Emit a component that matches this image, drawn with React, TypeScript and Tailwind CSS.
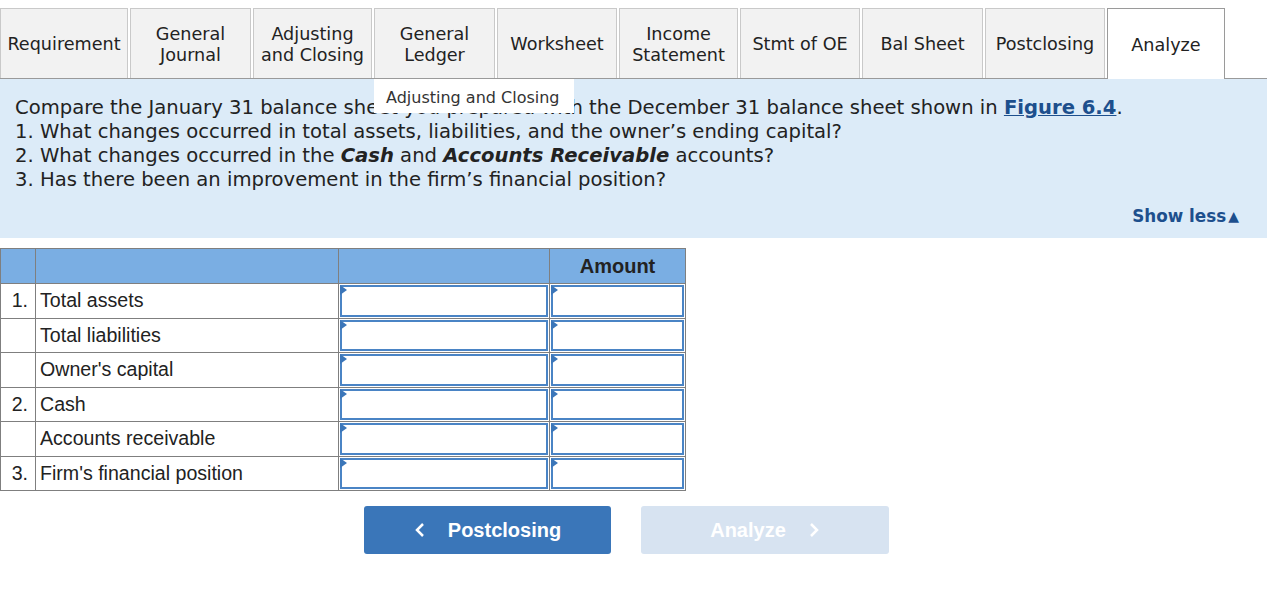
import React from "react";

const tabs: { label: React.ReactNode; w: number; active?: boolean }[] = [
  { label: "Requirement", w: 128 },
  { label: <>General<br />Journal</>, w: 121 },
  { label: <>Adjusting<br />and Closing</>, w: 119 },
  { label: <>General<br />Ledger</>, w: 121 },
  { label: "Worksheet", w: 120 },
  { label: <>Income<br />Statement</>, w: 119 },
  { label: "Stmt of OE", w: 120 },
  { label: "Bal Sheet", w: 121 },
  { label: "Postclosing", w: 120 },
  { label: "Analyze", w: 118, active: true },
];

const rows: { n: string; label: string }[] = [
  { n: "1.", label: "Total assets" },
  { n: "", label: "Total liabilities" },
  { n: "", label: "Owner's capital" },
  { n: "2.", label: "Cash" },
  { n: "", label: "Accounts receivable" },
  { n: "3.", label: "Firm's financial position" },
];

function InputBox() {
  return (
    <div className="relative h-full w-full border-2 border-[#4a84c5] bg-white">
      <svg className="absolute left-[-2px] top-[-2px]" width="8" height="10" viewBox="0 0 8 10">
        <polygon points="0,0 7,5 0,10" fill="#3b76b9" />
      </svg>
    </div>
  );
}

export default function App() {
  return (
    <div className="relative h-[601px] w-[1267px] overflow-hidden bg-white" style={{ fontFamily: "'DejaVu Sans', sans-serif" }}>
      {/* Tabs */}
      <div className="flex items-end gap-[2px] border-b border-[#9a9a9a] pt-2">
        {tabs.map((t, i) => (
          <div
            key={i}
            style={{ width: t.w }}
            className={
              "flex h-[70px] items-center justify-center whitespace-nowrap pt-[2px] text-center text-[17.6px] leading-[21px] text-[#222] " +
              (t.active
                ? "relative top-[1px] -mt-[1px] h-[71px] border border-b-0 border-[#9a9a9a] bg-white"
                : "border border-b-0 border-[#c9c9c9] bg-[#f2f2f2]")
            }
          >
            <span>{t.label}</span>
          </div>
        ))}
      </div>

      {/* Question panel */}
      <div className="relative h-[159px] bg-[#dcebf8] pl-[15px] pt-[17px] text-[19.6px] leading-[24px] text-[#222]">
        <div className="whitespace-nowrap">
          Compare the January 31 balance sheet you prepared with the December 31 balance sheet shown in{" "}
          <span className="font-bold text-[#1d4f8d] underline">Figure 6.4</span>.
        </div>
        <div className="whitespace-nowrap">1. What changes occurred in total assets, liabilities, and the owner’s ending capital?</div>
        <div className="whitespace-nowrap">
          2. What changes occurred in the <b><i>Cash</i></b> and <b><i>Accounts Receivable</i></b> accounts?
        </div>
        <div className="whitespace-nowrap">3. Has there been an improvement in the firm’s financial position?</div>
        <div className="absolute bottom-[10px] right-[28px] flex items-center text-[16.8px] font-bold text-[#1d4f8d]">
          Show less
          <span className="ml-[2px] text-[14px]">▲</span>
        </div>
        {/* tooltip */}
        <div className="absolute left-[374px] top-0 flex h-[34px] w-[200px] items-center whitespace-nowrap bg-white pl-[12px] pt-[4px] text-[16px] text-[#333]">
          Adjusting and Closing
        </div>
      </div>

      {/* Table */}
      <table
        className="mt-[10px] border-collapse text-[19.6px] text-[#222]"
        style={{ fontFamily: "'Liberation Sans', Arial, sans-serif" }}
      >
        <tbody>
          <tr className="h-[35px] bg-[#7aaee3]">
            <td className="w-[35px] border border-[#7f7f7f]" />
            <td className="w-[303px] border border-[#7f7f7f]" />
            <td className="w-[211px] border border-[#7f7f7f]" />
            <td className="w-[136px] border border-[#7f7f7f] text-center text-[20px] font-bold text-[#222]">Amount</td>
          </tr>
          {rows.map((r, i) => (
            <tr key={i} className="h-[34.5px]">
              <td className="border border-[#7f7f7f] pr-[7px] text-right align-middle">{r.n}</td>
              <td className="whitespace-nowrap border border-[#7f7f7f] pl-[4px] align-middle">{r.label}</td>
              <td className="h-[34.5px] border border-[#7f7f7f] p-[1px]">
                <InputBox />
              </td>
              <td className="h-[34.5px] border border-[#7f7f7f] p-[1px]">
                <InputBox />
              </td>
            </tr>
          ))}
        </tbody>
      </table>

      {/* Buttons */}
      <div
        className="ml-[364px] mt-[15px] flex gap-[30px] text-[20px] font-bold"
        style={{ fontFamily: "'Liberation Sans', Arial, sans-serif" }}
      >
        <div className="flex h-[48px] w-[247px] items-center justify-center rounded-[3px] bg-[#3a76b9] text-white">
          <svg width="12" height="18" viewBox="0 0 12 18" className="mr-[22px]">
            <polyline points="9,3 3,9 9,15" fill="none" stroke="white" strokeWidth="2.5" />
          </svg>
          Postclosing
        </div>
        <div className="flex h-[48px] w-[248px] items-center justify-center rounded-[3px] bg-[#d7e3f1] text-white">
          Analyze
          <svg width="12" height="18" viewBox="0 0 12 18" className="ml-[22px]">
            <polyline points="3,3 9,9 3,15" fill="none" stroke="white" strokeWidth="2.5" />
          </svg>
        </div>
      </div>
    </div>
  );
}
